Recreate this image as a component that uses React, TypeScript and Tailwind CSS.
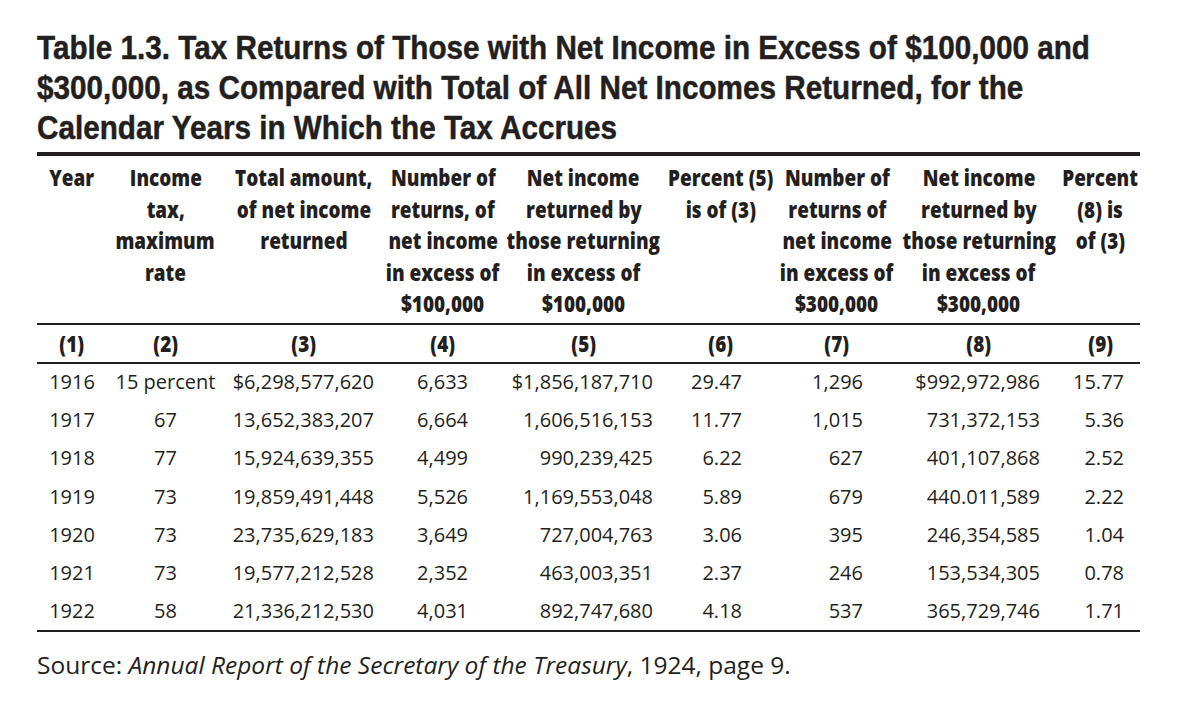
import React from 'react';

const COLS = [
  { w: 70, head: ['Year'], num: '(1)', align: 'text-center', pr: '' },
  { w: 117, head: ['Income', 'tax,', 'maximum', 'rate'], num: '(2)', align: 'text-center', pr: '' },
  { w: 159, head: ['Total amount,', 'of net income', 'returned'], num: '(3)', align: 'text-right', pr: 'pr-[9px]' },
  { w: 120, head: ['Number of', 'returns, of', 'net income', 'in excess of', '$100,000'], num: '(4)', align: 'text-right', pr: 'pr-[35px]' },
  { w: 161, head: ['Net income', 'returned by', 'those returning', 'in excess of', '$100,000'], num: '(5)', align: 'text-right', pr: 'pr-[11px]' },
  { w: 113, head: ['Percent (5)', 'is of (3)'], num: '(6)', align: 'text-right', pr: 'pr-[35px]' },
  { w: 120, head: ['Number of', 'returns of', 'net income', 'in excess of', '$300,000'], num: '(7)', align: 'text-right', pr: 'pr-[34px]' },
  { w: 164, head: ['Net income', 'returned by', 'those returning', 'in excess of', '$300,000'], num: '(8)', align: 'text-right', pr: 'pr-[21px]' },
  { w: 79, head: ['Percent', '(8) is', 'of (3)'], num: '(9)', align: 'text-right', pr: 'pr-[16px]' },
];

const ROWS = [
  ['1916', '15 percent', '$6,298,577,620', '6,633', '$1,856,187,710', '29.47', '1,296', '$992,972,986', '15.77'],
  ['1917', '67', '13,652,383,207', '6,664', '1,606,516,153', '11.77', '1,015', '731,372,153', '5.36'],
  ['1918', '77', '15,924,639,355', '4,499', '990,239,425', '6.22', '627', '401,107,868', '2.52'],
  ['1919', '73', '19,859,491,448', '5,526', '1,169,553,048', '5.89', '679', '440.011,589', '2.22'],
  ['1920', '73', '23,735,629,183', '3,649', '727,004,763', '3.06', '395', '246,354,585', '1.04'],
  ['1921', '73', '19,577,212,528', '2,352', '463,003,351', '2.37', '246', '153,534,305', '0.78'],
  ['1922', '58', '21,336,212,530', '4,031', '892,747,680', '4.18', '537', '365,729,746', '1.71'],
];

const TITLE = [
  'Table 1.3. Tax Returns of Those with Net Income in Excess of $100,000 and',
  '$300,000, as Compared with Total of All Net Incomes Returned, for the',
  'Calendar Years in Which the Tax Accrues',
];

const body = "font-['Open_Sans','Noto_Sans',sans-serif]";
const cond = "font-['Open_Sans','Noto_Sans',sans-serif] font-extrabold text-[22.5px]";

function CondLine({ text }: { text: string }) {
  return <span className="inline-block whitespace-nowrap scale-x-[0.84] origin-center">{text}</span>;
}

export default function App() {
  return (
    <div className="w-[1200px] h-[704px] bg-white text-[#231f20] pl-[37px] pt-[27px] overflow-hidden">
      <h1 className="font-['Liberation_Sans',Arial,sans-serif] font-bold text-[34px] leading-[40px] [-webkit-text-stroke:0.5px_#231f20]">
        {TITLE.map((t, i) => (
          <div key={i} className="whitespace-nowrap scale-x-[0.873] origin-left">
            {t}
          </div>
        ))}
      </h1>

      <table className="mt-[5px] border-collapse table-fixed w-[1103px]">
        <colgroup>
          {COLS.map((c, i) => (
            <col key={i} style={{ width: c.w }} />
          ))}
        </colgroup>
        <thead>
          <tr className="border-t-4 border-b-2 border-[#231f20]">
            {COLS.map((c, i) => (
              <th key={i} className={`${cond} leading-[31.5px] align-top pt-[6px] pb-[3px] px-0`}>
                <div className="flex flex-col items-center">
                  {c.head.map((l, j) => (
                    <CondLine key={j} text={l} />
                  ))}
                </div>
              </th>
            ))}
          </tr>
          <tr className="border-b-2 border-[#231f20] h-[37px]">
            {COLS.map((c, i) => (
              <th key={i} className={`${cond} leading-[37px] align-middle p-0`}>
                <div className="flex justify-center">
                  <CondLine text={c.num} />
                </div>
              </th>
            ))}
          </tr>
        </thead>
        <tbody className="border-b-2 border-[#231f20]">
          {ROWS.map((r, i) => (
            <tr key={i} className="h-[38.3px]">
              {r.map((v, j) => (
                <td
                  key={j}
                  className={`${body} text-[20px] leading-[28px] align-middle whitespace-nowrap p-0 ${COLS[j].align} ${COLS[j].pr}`}
                >
                  {v}
                </td>
              ))}
            </tr>
          ))}
        </tbody>
      </table>

      <p className={`${body} text-[24.5px] leading-[30px] mt-[18px] whitespace-nowrap`}>
        Source: <i>Annual Report of the Secretary of the Treasury</i>, 1924, page 9.
      </p>
    </div>
  );
}
